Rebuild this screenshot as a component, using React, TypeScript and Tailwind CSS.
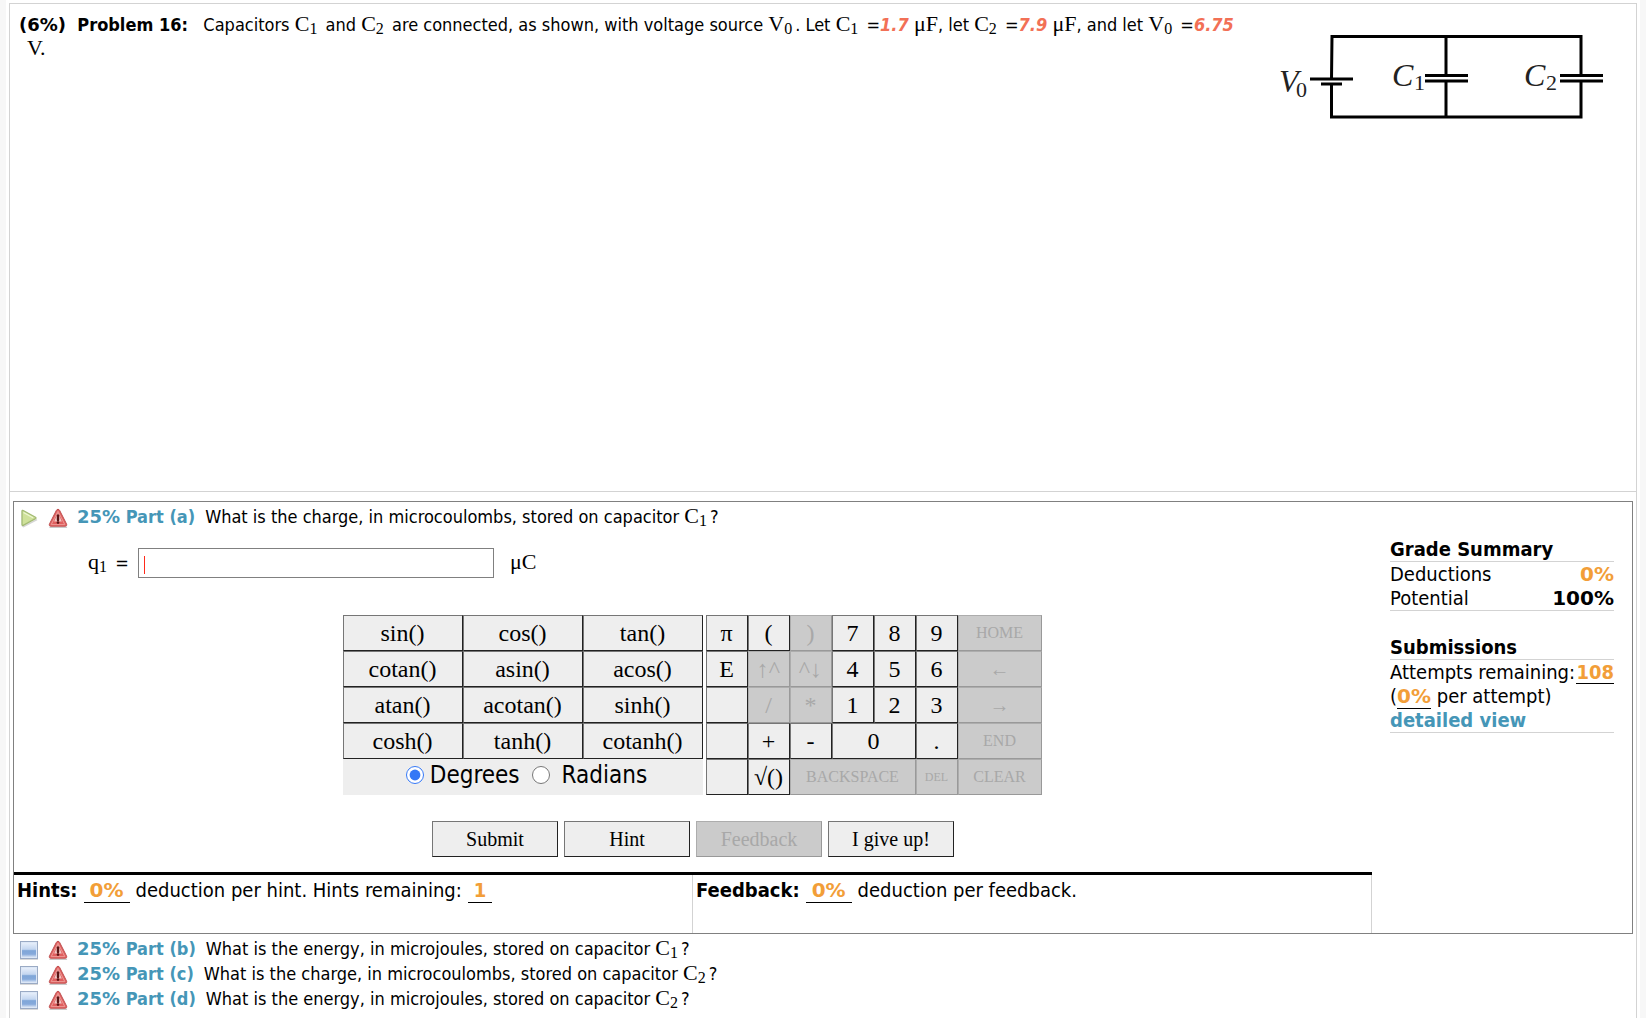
import { useState, type ReactNode } from 'react';
import clsx from 'clsx';

interface Key {
  label: string;
  name?: string;
  span?: string;
  disabled?: boolean;
  size?: string;
}

interface Part {
  id: string;
  question: string;
  sub: number;
}

const functionKeys = [
  'sin()', 'cos()', 'tan()',
  'cotan()', 'asin()', 'acos()',
  'atan()', 'acotan()', 'sinh()',
  'cosh()', 'tanh()', 'cotanh()',
];

const keypad: Key[] = [
  { label: 'π' },
  { label: '(' },
  { label: ')', disabled: true },
  { label: '7' },
  { label: '8' },
  { label: '9' },
  { label: 'HOME', disabled: true, size: 'text-base' },
  { label: 'E' },
  { label: '↑^', name: 'superscript', disabled: true },
  { label: '^↓', name: 'subscript', disabled: true },
  { label: '4' },
  { label: '5' },
  { label: '6' },
  { label: '←', name: 'left', disabled: true, size: 'text-xl' },
  { label: '', name: 'blank 1' },
  { label: '/', disabled: true },
  { label: '*', disabled: true },
  { label: '1' },
  { label: '2' },
  { label: '3' },
  { label: '→', name: 'right', disabled: true, size: 'text-xl' },
  { label: '', name: 'blank 2' },
  { label: '+' },
  { label: '-' },
  { label: '0', span: 'col-span-2' },
  { label: '.' },
  { label: 'END', disabled: true, size: 'text-base' },
  { label: '', name: 'blank 3' },
  { label: '√()' },
  { label: 'BACKSPACE', span: 'col-span-3', disabled: true, size: 'text-base' },
  { label: 'DEL', disabled: true, size: 'text-xs' },
  { label: 'CLEAR', disabled: true, size: 'text-base' },
];

const otherParts: Part[] = [
  { id: 'b', question: 'What is the energy, in microjoules, stored on capacitor', sub: 1 },
  { id: 'c', question: 'What is the charge, in microcoulombs, stored on capacitor', sub: 2 },
  { id: 'd', question: 'What is the energy, in microjoules, stored on capacitor', sub: 2 },
];

function MathText({ children, sub }: { children: ReactNode; sub?: number }) {
  return (
    <span className="font-['Liberation_Serif',serif] text-[22px] leading-none">
      {children}
      {sub !== undefined && <sub className="bottom-[-3px] mr-[3px] text-base leading-none">{sub}</sub>}
    </span>
  );
}

function KeyButton({ label, name, span, disabled, size = 'text-2xl' }: Key) {
  return (
    <button
      type="button"
      disabled={disabled}
      aria-label={name}
      className={clsx(
        "flex h-9 items-center justify-center border font-['Liberation_Serif',serif] leading-none whitespace-nowrap",
        size,
        span,
        disabled
          ? 'border-t-[#adadad] border-r-[#999] border-b-[#999] border-l-[#adadad] bg-[#cbcbcb] text-[#a8a8a8]'
          : 'border-t-[#767676] border-r-[#222] border-b-[#222] border-l-[#767676] bg-[#eee] text-black'
      )}
    >
      {label}
    </button>
  );
}

function WarningIcon() {
  return (
    <svg className="mt-0.5 size-5 shrink-0" viewBox="0 0 20 20" fill="none">
      <path d="M2 19.2h16.5" stroke="#c9c9c9" strokeWidth="1.4" strokeLinecap="round" />
      <path d="M10 1.3c.8 0 1.3.4 1.7 1.2l6.8 13.4c.6 1.3.1 2.3-1.3 2.3H2.8c-1.4 0-1.9-1-1.3-2.3L8.3 2.5c.4-.8.9-1.2 1.7-1.2z" fill="#e05f5f" stroke="#bf5050" />
      <path d="M10 3.2L16.8 16.6H3.2z" stroke="#ee9a96" />
      <path d="M10 4.8L13.8 13.4H6.2z" fill="#efc9c6" />
      <path d="M10 7.5v4.5" stroke="#5a1414" strokeWidth="2.4" strokeLinecap="round" />
      <circle cx="10" cy="14.6" r="1.3" fill="#5a1414" />
    </svg>
  );
}

function PlayIcon() {
  return (
    <svg className="mt-0.5 size-5 shrink-0" viewBox="0 0 20 20" fill="none">
      <path d="M3.5 3.2v14.6l1 .8L18 11.6" stroke="#d5d5d5" strokeWidth="1.5" />
      <path d="M3 3.2c0-.8.6-1 1.2-.7l12.3 6.7c.6.4.6 1 0 1.4L4.2 17.3c-.6.3-1.2.1-1.2-.7z" fill="#cfe19a" stroke="#a3ba74" strokeWidth="1.3" />
      <path d="M4.5 4.5l9.5 5.3" stroke="#eef6d2" strokeWidth="1.2" />
    </svg>
  );
}

function BoxIcon() {
  return (
    <svg className="mt-0.5 size-5 shrink-0" viewBox="0 0 20 20" fill="none">
      <defs>
        <linearGradient id="box" x1="0" y1="0" x2="0" y2="1">
          <stop offset="0" stopColor="#e6eefa" />
          <stop offset="0.45" stopColor="#c3d6f0" />
          <stop offset="0.55" stopColor="#7fa6d8" />
          <stop offset="0.8" stopColor="#86aadb" />
          <stop offset="1" stopColor="#d3e0f3" />
        </linearGradient>
      </defs>
      <path d="M1 19.3h18" stroke="#cfcfcf" />
      <rect x="1.5" y="1.5" width="17" height="17" fill="#dce7f6" stroke="#9aaac4" />
      <rect x="3" y="3" width="14" height="14" fill="url(#box)" />
    </svg>
  );
}

function Circuit() {
  return (
    <svg className="block w-[340px] shrink-0" viewBox="1270 20 340 110" role="img" aria-label="Circuit with V0, C1 and C2">
      <g stroke="#000" strokeWidth="3" fill="none">
        <path d="M1331.5 79L1332 36.5H1581V75.5M1331.5 84V117H1581V81M1446 36.5V75.5M1446 81V117" />
        <path d="M1310 79h43M1321 84h21" />
        <path d="M1425 75.5h43M1425 81h43M1560 75.5h43M1560 81h43" />
      </g>
      <g className="font-['Liberation_Serif',serif] italic" fill="#222" fontSize="32">
        <text x="1279" y="92">V</text>
        <text x="1392" y="86">C</text>
        <text x="1524" y="86">C</text>
      </g>
      <g className="font-['Liberation_Serif',serif]" fill="#222" fontSize="22">
        <text x="1296" y="97">0</text>
        <text x="1414" y="90">1</text>
        <text x="1546" y="90">2</text>
      </g>
    </svg>
  );
}

function Value({ children }: { children: ReactNode }) {
  return <b className="text-[#f27056] italic">{children}</b>;
}

function Percent({ children }: { children: ReactNode }) {
  return <b className="font-['DejaVu_Sans',sans-serif]">{children}</b>;
}

function PartTitle({ id, question, sub }: Part) {
  return (
    <p className="whitespace-pre text-lg leading-6">
      <a href={`#part-${id}`} className="mr-2.5 font-bold text-[#4596b7]"><Percent>25%</Percent> Part ({id})</a>
      {question} <MathText sub={sub}>C</MathText>?
    </p>
  );
}

export default function App() {
  const [answer, setAnswer] = useState('');
  const [unit, setUnit] = useState('degrees');

  return (
    <div className="min-h-screen bg-[#f7f7f7] px-1.5 font-['DejaVu_Sans_Condensed','DejaVu_Sans',sans-serif] text-black">
      <div className="min-h-screen bg-white px-[3px] pt-[3px]">
        <main className="min-h-[1015px] border border-b-0 border-[#d3d3d3]">
          <section className="flex h-[488px] items-start justify-between border-b border-[#d3d3d3] pt-[9px] pr-[26px] pl-[9px]">
            <p className="whitespace-pre text-lg leading-6">
              <b><Percent>(6%)</Percent>  Problem 16:</b>
              {'   '}Capacitors <MathText sub={1}>C</MathText> and <MathText sub={2}>C</MathText> are connected, as shown, with voltage source <MathText sub={0}>V</MathText>. Let <MathText sub={1}>C</MathText> =<Value>1.7</Value> <MathText>μF</MathText>, let <MathText sub={2}>C</MathText> =<Value>7.9</Value> <MathText>μF</MathText>, and let <MathText sub={0}>V</MathText> =<Value>6.75</Value>
              <br />
              <span className="ml-2"><MathText>V.</MathText></span>
            </p>
            <div className="pt-[7px]">
              <Circuit />
            </div>
          </section>

          <section id="part-a" className="mx-[3px] mt-[9px] flex border border-[#808080]">
            <div className="flex-1">
              <div className="flex items-center gap-[9px] pt-[3px] pl-[5px]">
                <PlayIcon />
                <WarningIcon />
                <PartTitle id="a" question="What is the charge, in microcoulombs, stored on capacitor" sub={1} />
              </div>

              <div className="mt-[19px] flex items-center pl-[74px]">
                <label htmlFor="answer" className="w-[50px] text-lg">
                  <MathText sub={1}>q</MathText> =
                </label>
                <div className="relative">
                  <input
                    id="answer"
                    type="text"
                    value={answer}
                    onChange={(e) => setAnswer(e.target.value)}
                    className="block h-[30px] w-[356px] border border-[#808080] bg-white px-1.5 text-lg outline-none"
                  />
                  {answer === '' && <span className="pointer-events-none absolute top-2 left-1.5 h-[18px] w-px bg-[#ff2a1a]"></span>}
                </div>
                <span className="ml-4"><MathText>μC</MathText></span>
              </div>

              <div className="mt-[37px] flex items-start justify-center gap-[3px] pr-0.5">
                <div className="w-[360px] bg-[#eee]">
                  <div className="grid grid-cols-3">
                    {functionKeys.map((label) => (
                      <KeyButton key={label} label={label} />
                    ))}
                  </div>
                  <div className="flex h-9 justify-center pb-1 pl-2 text-2xl leading-8">
                    <label className="flex items-center">
                      <input
                        type="radio"
                        name="unit"
                        checked={unit === 'degrees'}
                        onChange={() => setUnit('degrees')}
                        className="mr-1.5 size-[18px] accent-[#3478f6]"
                      />
                      Degrees
                    </label>
                    <label className="ml-3 flex items-center">
                      <input
                        type="radio"
                        name="unit"
                        checked={unit === 'radians'}
                        onChange={() => setUnit('radians')}
                        className="mr-3 size-[18px] accent-[#3478f6]"
                      />
                      Radians
                    </label>
                  </div>
                </div>
                <div className="grid grid-cols-[repeat(6,42px)_84px]">
                  {keypad.map((key) => (
                    <KeyButton key={key.name ?? key.label} {...key} />
                  ))}
                </div>
              </div>

              <div className="mt-[26px] grid grid-cols-[repeat(4,126px)] justify-center gap-1.5">
                <KeyButton label="Submit" size="text-xl" />
                <KeyButton label="Hint" size="text-xl" />
                <KeyButton label="Feedback" size="text-xl" disabled />
                <KeyButton label="I give up!" size="text-xl" />
              </div>

              <div className="mt-[15px] grid h-[61px] grid-cols-2 border-t-[3px] border-t-black text-xl leading-6">
                <p className="border-r border-[#d3d3d3] pt-[3px] pl-[3px] whitespace-nowrap">
                  <b>Hints:</b>
                  <span className="mx-1.5 inline-block border-b border-black px-1.5 text-[#f29e38]"><Percent>0%</Percent></span>
                  deduction per hint. Hints remaining:
                  <b className="mx-1.5 inline-block border-b border-black px-1.5 text-[#f29e38]">1</b>
                </p>
                <p className="border-r border-[#d3d3d3] pt-[3px] pl-[3px] whitespace-nowrap">
                  <b>Feedback:</b>
                  <span className="mx-1.5 inline-block border-b border-black px-1.5 text-[#f29e38]"><Percent>0%</Percent></span>
                  deduction per feedback.
                </p>
              </div>
            </div>

            <aside className="w-[260px] px-[18px] pt-[35px] text-xl leading-6 whitespace-nowrap">
              <h2 className="border-b border-[#d3d3d3] font-bold">Grade Summary</h2>
              <dl className="grid grid-cols-[1fr_auto] border-b border-[#d3d3d3]">
                <dt>Deductions</dt>
                <dd className="text-right text-[#f29e38]"><Percent>0%</Percent></dd>
                <dt>Potential</dt>
                <dd className="text-right"><Percent>100%</Percent></dd>
              </dl>
              <h2 className="mt-6 border-b border-[#d3d3d3] font-bold">Submissions</h2>
              <div className="border-b border-[#d3d3d3]">
                <p className="flex h-6 justify-between">
                  Attempts remaining: <b className="border-b border-black text-[#f29e38]">108</b>
                </p>
                <p>
                  (<span className="border-b border-black text-[#f29e38]"><Percent>0%</Percent></span> per attempt)
                </p>
                <a href="#details" className="block font-bold text-[#4596b7]">detailed view</a>
              </div>
            </aside>
          </section>

          <ul className="pt-0.5 pl-[9px]">
            {otherParts.map((part) => (
              <li key={part.id} className="flex h-[25px] items-center gap-[9px]">
                <BoxIcon />
                <WarningIcon />
                <PartTitle {...part} />
              </li>
            ))}
          </ul>
        </main>
      </div>
    </div>
  );
}
